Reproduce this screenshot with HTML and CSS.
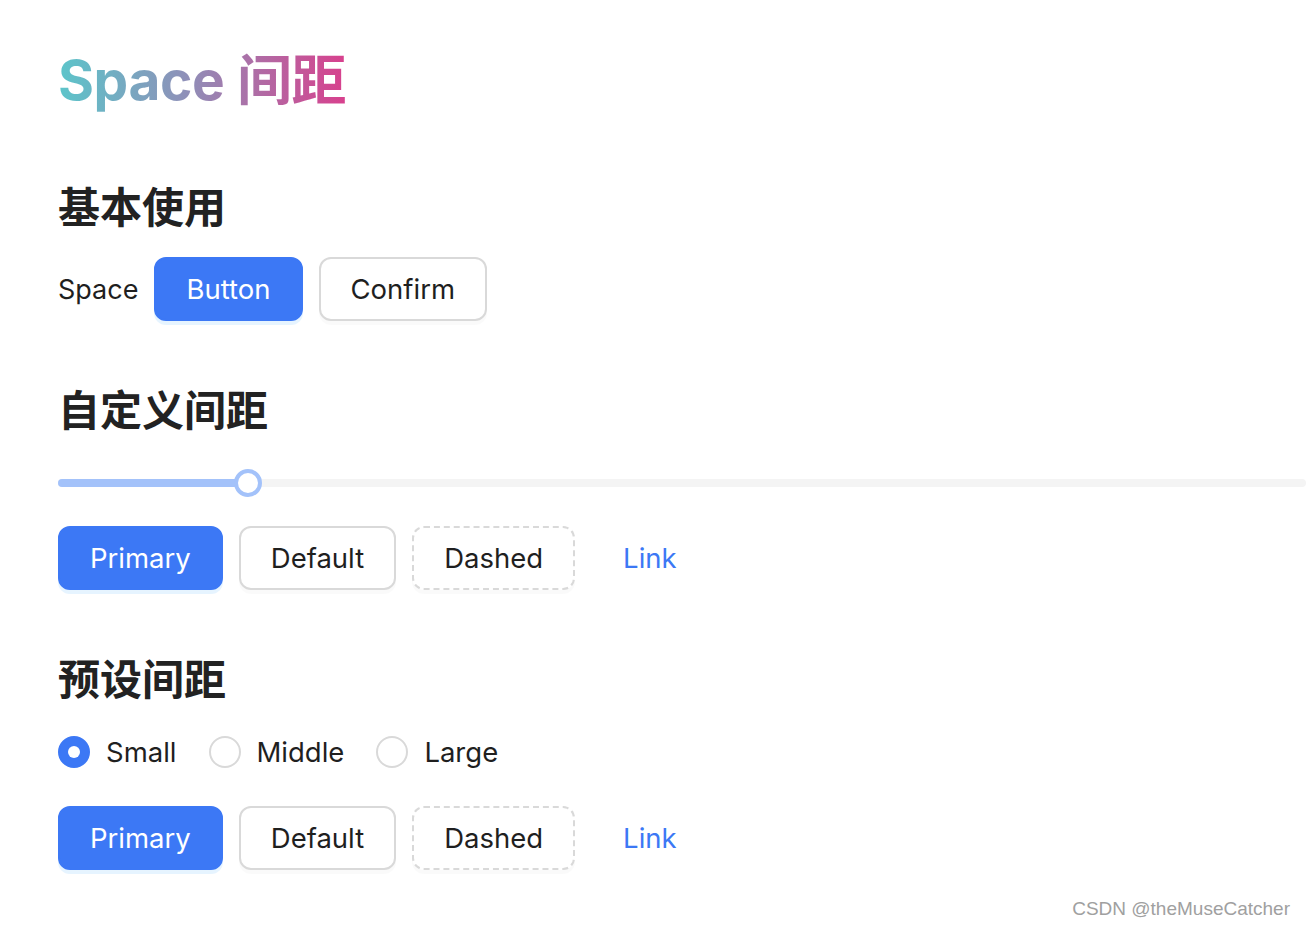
FILE: index.html
```html
<!DOCTYPE html>
<html lang="zh-CN">
<head>
<meta charset="utf-8">
<title>Space 间距</title>
<link rel="stylesheet" href="styles.css">
</head>
<body>
<main class="page">
  <h1 class="title">Space 间距</h1>

  <h2 class="heading h-basic">基本使用</h2>
  <div class="space-row row-basic">
    <span class="plain">Space</span>
    <button class="btn btn-primary">Button</button>
    <button class="btn btn-default">Confirm</button>
  </div>

  <h2 class="heading h-custom">自定义间距</h2>
  <div class="slider">
    <div class="rail"></div>
    <div class="track" style="width:190px"></div>
    <div class="handle" style="left:190px"></div>
  </div>
  <div class="space-row row-custom">
    <button class="btn btn-primary">Primary</button>
    <button class="btn btn-default">Default</button>
    <button class="btn btn-dashed">Dashed</button>
    <button class="btn btn-link">Link</button>
  </div>

  <h2 class="heading h-preset">预设间距</h2>
  <div class="radio-group">
    <label class="radio-wrap"><span class="radio checked"></span><span class="radio-label">Small</span></label>
    <label class="radio-wrap"><span class="radio"></span><span class="radio-label">Middle</span></label>
    <label class="radio-wrap"><span class="radio"></span><span class="radio-label">Large</span></label>
  </div>
  <div class="space-row row-preset">
    <button class="btn btn-primary">Primary</button>
    <button class="btn btn-default">Default</button>
    <button class="btn btn-dashed">Dashed</button>
    <button class="btn btn-link">Link</button>
  </div>
</main>
<div class="watermark">CSDN @theMuseCatcher</div>
</body>
</html>
```

FILE: styles.css
```css
html, body {
  margin: 0;
  padding: 0;
  background: #ffffff;
  overflow: hidden;
}
body {
  font-family: "Inter", "Noto Sans", "Noto Sans CJK SC", sans-serif;
  color: rgba(0, 0, 0, 0.88);
  width: 1306px;
  height: 926px;
  position: relative;
}
.page {
  display: flex;
  flex-direction: column;
  align-items: flex-start;
  padding: 48px 0 0 58px;
}
.title {
  margin: 0;
  font-size: 55px;
  line-height: 64px;
  font-weight: 700;
  letter-spacing: -0.4px;
  font-family: "Inter", "Noto Sans CJK SC", sans-serif;
  background: linear-gradient(90deg, #5cc5ca 0%, #8f8fb8 45%, #d8408d 100%);
  -webkit-background-clip: text;
  background-clip: text;
  color: transparent;
}
.heading {
  margin: 0;
  font-size: 42px;
  line-height: 56px;
  font-weight: 700;
  font-family: "Noto Sans CJK SC", sans-serif;
  color: #222222;
}
.h-basic { margin-top: 65px; }
.h-custom { margin-top: 59px; }
.h-preset { margin-top: 59px; }

.space-row {
  display: flex;
  align-items: center;
  gap: 16px;
}
.row-basic { margin-top: 24px; }
.row-custom { margin-top: 29px; }
.row-preset { margin-top: 34px; }

.plain {
  font-size: 27px;
  line-height: 40px;
  color: #1f1f1f;
  padding-top: 2px;
}
.btn {
  font-family: "Inter", "Noto Sans", sans-serif;
  font-size: 27.5px;
  height: 64px;
  padding: 0 30px;
  border-radius: 12px;
  border: 2px solid #d9d9d9;
  background: #ffffff;
  color: #1f1f1f;
  box-shadow: 0 4px 0 rgba(0, 0, 0, 0.02);
  cursor: pointer;
}
.btn-primary {
  background: #3c78f5;
  border-color: #3c78f5;
  color: #ffffff;
  box-shadow: 0 4px 0 rgba(5, 145, 255, 0.1);
}
.btn-dashed {
  border-style: dashed;
}
.btn-link {
  border-color: transparent;
  background: transparent;
  box-shadow: none;
  color: #3c78f5;
}

.slider {
  position: relative;
  align-self: stretch;
  height: 28px;
  margin-top: 33px;
}
.rail {
  position: absolute;
  left: 0;
  right: 0;
  top: 10px;
  height: 8px;
  border-radius: 4px;
  background: #f4f4f4;
}
.track {
  position: absolute;
  left: 0;
  top: 10px;
  height: 8px;
  border-radius: 4px;
  background: #a3c2fa;
}
.handle {
  position: absolute;
  top: 0;
  width: 28px;
  height: 28px;
  box-sizing: border-box;
  margin-left: -14px;
  border-radius: 50%;
  border: 4px solid #a3c2fa;
  background: #ffffff;
}

.radio-group {
  display: flex;
  align-items: center;
  margin-top: 27px;
}
.radio-wrap {
  display: flex;
  align-items: center;
  margin-right: 16px;
}
.radio {
  width: 32px;
  height: 32px;
  box-sizing: border-box;
  border-radius: 50%;
  border: 2px solid #d9d9d9;
  background: #ffffff;
  display: flex;
  align-items: center;
  justify-content: center;
}
.radio.checked {
  border-color: #3c78f5;
  background: #3c78f5;
}
.radio.checked::after {
  content: "";
  width: 12px;
  height: 12px;
  border-radius: 50%;
  background: #ffffff;
}
.radio-label {
  padding: 0 16px;
  font-size: 27.5px;
  line-height: 40px;
  color: #1f1f1f;
}

.watermark {
  position: absolute;
  right: 16px;
  bottom: 6px;
  font-family: "Liberation Sans", Arial, sans-serif;
  font-size: 19px;
  color: #a0a0a0;
}
```
